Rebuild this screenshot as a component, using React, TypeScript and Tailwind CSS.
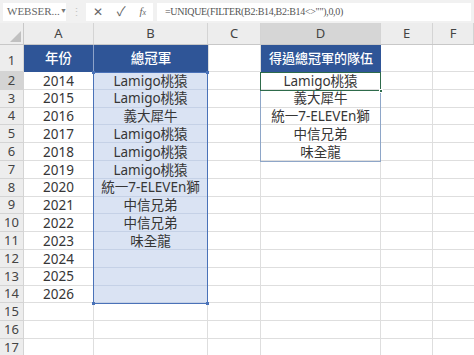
import React from 'react';

const cols = [
  { key: 'A', w: 'w-[70px]' },
  { key: 'B', w: 'w-[114px]' },
  { key: 'C', w: 'w-[53px]' },
  { key: 'D', w: 'w-[120px]' },
  { key: 'E', w: 'w-[52px]' },
  { key: 'F', w: 'flex-1' },
];

const years = ['2014', '2015', '2016', '2017', '2018', '2019', '2020', '2021', '2022', '2023', '2024', '2025', '2026'];
const champs = ['Lamigo桃猿', 'Lamigo桃猿', '義大犀牛', 'Lamigo桃猿', 'Lamigo桃猿', 'Lamigo桃猿', '統一7-ELEVEn獅', '中信兄弟', '中信兄弟', '味全龍', '', '', ''];
const unique = ['Lamigo桃猿', '義大犀牛', '統一7-ELEVEn獅', '中信兄弟', '味全龍'];

const cellFont = { fontFamily: '"Noto Sans", "Noto Sans CJK TC", sans-serif' };
const serif = { fontFamily: '"Liberation Serif", "Noto Sans CJK TC", serif' };

const App: React.FC = () => {
  const rows = Array.from({ length: 16 }, (_, i) => i + 2);

  return (
    <div className="w-[474px] h-[355px] overflow-hidden bg-white text-[#363636]" style={cellFont}>
      {/* formula bar */}
      <div className="h-[23px] bg-[#f1f1f1] flex items-center px-[3px]">
        <div className="w-[63px] h-[18px] bg-white flex items-center justify-between pl-[4px] pr-[3px] text-[#666] text-[11px]" style={serif}>
          <span>WEBSER...</span>
          <span className="text-[7px] text-[#777]">▼</span>
        </div>
        <div className="w-[20px] flex justify-center text-[#c4c4c4] text-[11px] leading-none">⋮</div>
        <div className="w-[67px] h-[18px] bg-white flex items-center justify-around text-[#666] text-[12px]">
          <span className="leading-none">✕</span>
          <span className="leading-none text-[13px]">✓</span>
          <span className="italic text-[11px] leading-none" style={serif}>f<span className="text-[8px]">x</span></span>
        </div>
        <div className="flex-1 h-[18px] ml-[4px] bg-white flex items-center pl-[8px] text-[10px] text-[#555] tracking-[-0.3px]" style={serif}>
          =UNIQUE(FILTER(B2:B14,B2:B14&lt;&gt;""),0,0)
        </div>
      </div>

      <div className="relative">
        {/* column headers */}
        <div className="flex h-[22px] bg-[#ededed] border-b border-[#c8c8c8]">
          <div className="w-[24px] h-full border-r border-[#c8c8c8] relative">
            <div className="absolute right-[2px] bottom-[2px] w-0 h-0 border-l-[11px] border-l-transparent border-b-[11px] border-b-[#c0c0c0]" />
          </div>
          {cols.map(c => (
            <div
              key={c.key}
              className={`${c.w} h-full flex items-center justify-center text-[13px] text-[#444] border-r border-[#d4d4d4] ${c.key === 'D' ? 'bg-[#d6d6d6]' : ''}`}
            >
              {c.key}
            </div>
          ))}
        </div>

        {/* row 1 */}
        <div className="flex h-[27px]">
          <div className="w-[24px] h-full bg-[#ededed] border-r border-b border-[#d4d4d4] flex items-end justify-center pb-[1px] text-[13px] text-[#444]">1</div>
          <div className="w-[70px] h-full bg-[#2f5597] border-r border-[#8ea3c9] flex items-center justify-center text-white text-[13.5px] font-medium">年份</div>
          <div className="w-[114px] h-full bg-[#2f5597] flex items-center justify-center text-white text-[13.5px] font-medium">總冠軍</div>
          <div className="w-[53px] h-full border-r border-l border-b border-[#dedede]" />
          <div className="w-[120px] h-full bg-[#2f5597] flex items-center justify-center text-white text-[13px] font-medium">得過總冠軍的隊伍</div>
          <div className="w-[52px] h-full border-r border-b border-[#dedede]" />
          <div className="flex-1 h-full border-b border-[#dedede]" />
        </div>

        {rows.map((r, i) => (
          <div key={r} className="flex h-[17.8px] text-[13.5px] leading-none">
            <div className={`w-[24px] h-full border-r border-b border-[#d4d4d4] flex items-center justify-center text-[13px] text-[#444] ${r === 2 ? 'bg-[#d4d4d4]' : 'bg-[#ededed]'}`}>{r}</div>
            <div className="w-[70px] h-full border-r border-b border-[#dedede] flex items-center justify-center pt-[2px]">{years[i] ?? ''}</div>
            <div className={`w-[114px] h-full border-r border-b flex items-center justify-center pt-[2px] ${i < 13 ? 'bg-[#dae3f3] border-[#c5d1e6]' : 'border-[#dedede]'}`}>{champs[i] ?? ''}</div>
            <div className="w-[53px] h-full border-r border-b border-[#dedede]" />
            <div className="w-[120px] h-full border-r border-b border-[#dedede] flex items-center justify-center pt-[2px]">{unique[i] ?? ''}</div>
            <div className="w-[52px] h-full border-r border-b border-[#dedede]" />
            <div className="flex-1 h-full border-b border-[#dedede]" />
          </div>
        ))}

        {/* B2:B14 reference outline */}
        <div className="absolute left-[93px] top-[49px] w-[115px] h-[232px] border border-[#4a72b8] pointer-events-none">
          <div className="absolute -left-[2px] -top-[2px] w-[3px] h-[3px] bg-[#4a72b8]" />
          <div className="absolute -right-[2px] -top-[2px] w-[3px] h-[3px] bg-[#4a72b8]" />
          <div className="absolute -left-[2px] -bottom-[2px] w-[3px] h-[3px] bg-[#4a72b8]" />
          <div className="absolute -right-[2px] -bottom-[2px] w-[3px] h-[3px] bg-[#4a72b8]" />
        </div>

        {/* D2:D6 spill outline */}
        <div className="absolute left-[260px] top-[49px] w-[121px] h-[90px] border border-[#8ea6c8] pointer-events-none" />

        {/* D2 active cell */}
        <div className="absolute left-[260px] top-[49px] w-[121px] h-[19px] border-[1.5px] border-[#2e6b4b] pointer-events-none">
          <div className="absolute -right-[3px] -bottom-[3px] w-[4px] h-[4px] bg-[#2e6b4b] border border-white" />
        </div>
      </div>
    </div>
  );
};

export default App;
